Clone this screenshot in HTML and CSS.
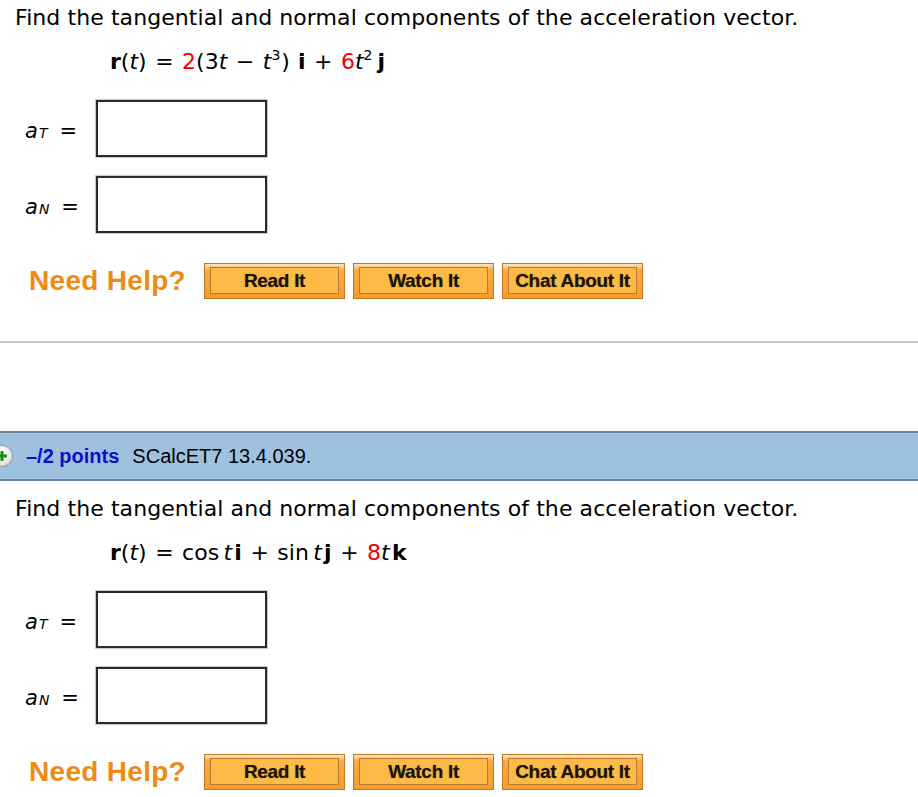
FILE: index.html
```html
<!DOCTYPE html>
<html>
<head>
<meta charset="utf-8">
<link rel="stylesheet" href="styles.css">
</head>
<body>
<div class="question q1">
  <p class="prompt">Find the tangential and normal components of the acceleration vector.</p>
  <p class="equation"><b>r</b>(<i>t</i>) = <span class="red">2</span>(3<i>t</i> − <i>t</i><sup>3</sup>)<span class="gap"></span><b>i</b> + <span class="red">6</span><i>t</i><sup>2</sup><span class="gap2"></span><b>j</b></p>
  <div class="answers">
    <div class="answer-row"><span class="label"><i>a</i><sub>T</sub><span class="eq">=</span></span><span class="box"></span></div>
    <div class="answer-row"><span class="label"><i>a</i><sub>N</sub><span class="eq">=</span></span><span class="box"></span></div>
  </div>
  <div class="help">
    <span class="need">Need Help?</span>
    <span class="btn"><span class="btn-in">Read It</span></span>
    <span class="btn"><span class="btn-in">Watch It</span></span>
    <span class="btn"><span class="btn-in">Chat About It</span></span>
  </div>
</div>
<div class="divider"></div>
<div class="qheader">
  <span class="plus"><svg width="20" height="20" viewBox="0 0 20 20"><path d="M10 5v10M5 10h10" stroke="#17901a" stroke-width="3" fill="none"/></svg></span>
  <span class="points">–/2 points</span>
  <span class="ref">SCalcET7 13.4.039.</span>
</div>
<div class="question q2">
  <p class="prompt">Find the tangential and normal components of the acceleration vector.</p>
  <p class="equation"><b>r</b>(<i>t</i>) = cos&#8201;<i>t</i>&#8202;<b>i</b> + sin&#8201;<i>t</i>&#8202;<b>j</b> + <span class="red">8</span><i>t</i>&#8202;<b>k</b></p>
  <div class="answers">
    <div class="answer-row"><span class="label"><i>a</i><sub>T</sub><span class="eq">=</span></span><span class="box"></span></div>
    <div class="answer-row"><span class="label"><i>a</i><sub>N</sub><span class="eq">=</span></span><span class="box"></span></div>
  </div>
  <div class="help">
    <span class="need">Need Help?</span>
    <span class="btn"><span class="btn-in">Read It</span></span>
    <span class="btn"><span class="btn-in">Watch It</span></span>
    <span class="btn"><span class="btn-in">Chat About It</span></span>
  </div>
</div>
</body>
</html>
```
FILE: styles.css
```css
html, body {
  margin: 0;
  padding: 0;
  background: #fff;
  overflow: hidden;
}
body {
  font-family: "DejaVu Sans", Verdana, sans-serif;
  color: #000;
  font-size: 22px;
}
.question {
  padding-left: 15px;
}
.q1 {
  padding-top: 6px;
}
.q2 {
  padding-top: 16px;
}
.prompt {
  margin: 0;
  line-height: 24px;
  height: 24px;
  letter-spacing: 0.08px;
}
.equation {
  margin: 20px 0 0 95px;
  line-height: 24px;
  height: 24px;
  white-space: nowrap;
  word-spacing: 1.5px;
}
.equation b {
  font-weight: bold;
}
.equation sup {
  font-size: 14px;
  vertical-align: 9px;
  line-height: 0;
  margin-right: 1px;
}
.gap {
  display: inline-block;
  width: 8px;
}
.gap2 {
  display: inline-block;
  width: 4px;
}
.red {
  color: #ee0000;
}
.answers {
  margin-top: 26px;
  display: flex;
  flex-direction: column;
  gap: 19px;
}
.answer-row {
  display: flex;
  align-items: center;
}
.label {
  width: 81px;
  padding-left: 10px;
  box-sizing: border-box;
  font-size: 21px;
  display: flex;
  align-items: baseline;
  margin-top: 4px;
}
.label sub {
  font-size: 14px;
  font-style: italic;
  vertical-align: -4px;
  line-height: 0;
  margin-left: 1px;
}
.label .eq {
  margin-left: 12px;
}
.box {
  width: 171px;
  height: 57px;
  box-sizing: border-box;
  border: 2px solid #2a2a2a;
  box-shadow: 0 0 0 1px #c8c8c8;
  background: #fff;
}
.help {
  margin-top: 30px;
  display: flex;
  align-items: center;
  height: 36px;
  padding-left: 14px;
}
.need {
  font-family: "Liberation Sans", Arial, sans-serif;
  font-weight: bold;
  font-size: 28px;
  letter-spacing: 0.3px;
  color: #ef8b14;
  margin-right: 18px;
  white-space: nowrap;
}
.btn {
  width: 141px;
  height: 36px;
  box-sizing: border-box;
  border: 1px solid #c17722;
  background: linear-gradient(#fde6be 0%, #f9aa42 18%, #f79c2c 100%);
  padding: 3px 5px 4px 5px;
  margin-right: 8px;
  display: flex;
}
.btn-in {
  flex: 1;
  border: 1px solid #b97a36;
  background: #fcbb46;
  display: flex;
  align-items: center;
  justify-content: center;
  font-family: "Liberation Sans", Arial, sans-serif;
  font-weight: bold;
  font-size: 19px;
  color: #1a1408;
  white-space: nowrap;
  letter-spacing: -0.3px;
  text-shadow: 0 0 1px rgba(60, 40, 0, 0.6);
}
.divider {
  margin-top: 42px;
  height: 2px;
  background: #c9c9c9;
}
.qheader {
  margin-top: 88px;
  height: 46px;
  border-top: 2px solid #6e8396;
  border-bottom: 2px solid #6e8396;
  background: #9ec1df;
  display: flex;
  align-items: center;
  font-family: "Liberation Sans", Arial, sans-serif;
  font-size: 20px;
}
.plus {
  width: 20px;
  height: 20px;
  flex: none;
  border-radius: 50%;
  background: radial-gradient(circle at 40% 35%, #ffffff 0%, #eef0ee 50%, #b9bdb9 100%);
  box-shadow: 0 0 0 1px #9aa39a;
  margin-left: -8px;
  display: flex;
}
.points {
  color: #0a10c8;
  font-weight: bold;
  margin-left: 14px;
}
.ref {
  margin-left: 13px;
  color: #000;
}
```
